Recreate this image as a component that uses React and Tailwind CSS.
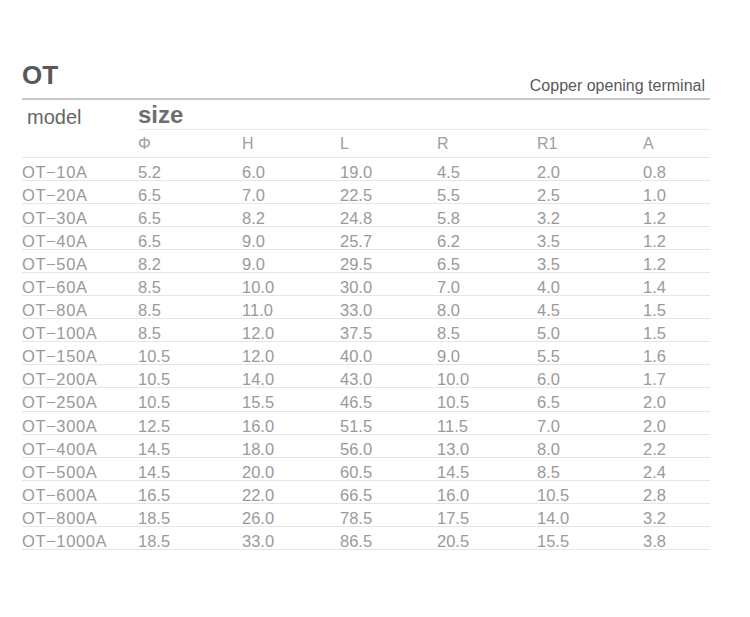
import React from "react"

const rows = [
  ["OT−10A", "5.2", "6.0", "19.0", "4.5", "2.0", "0.8"],
  ["OT−20A", "6.5", "7.0", "22.5", "5.5", "2.5", "1.0"],
  ["OT−30A", "6.5", "8.2", "24.8", "5.8", "3.2", "1.2"],
  ["OT−40A", "6.5", "9.0", "25.7", "6.2", "3.5", "1.2"],
  ["OT−50A", "8.2", "9.0", "29.5", "6.5", "3.5", "1.2"],
  ["OT−60A", "8.5", "10.0", "30.0", "7.0", "4.0", "1.4"],
  ["OT−80A", "8.5", "11.0", "33.0", "8.0", "4.5", "1.5"],
  ["OT−100A", "8.5", "12.0", "37.5", "8.5", "5.0", "1.5"],
  ["OT−150A", "10.5", "12.0", "40.0", "9.0", "5.5", "1.6"],
  ["OT−200A", "10.5", "14.0", "43.0", "10.0", "6.0", "1.7"],
  ["OT−250A", "10.5", "15.5", "46.5", "10.5", "6.5", "2.0"],
  ["OT−300A", "12.5", "16.0", "51.5", "11.5", "7.0", "2.0"],
  ["OT−400A", "14.5", "18.0", "56.0", "13.0", "8.0", "2.2"],
  ["OT−500A", "14.5", "20.0", "60.5", "14.5", "8.5", "2.4"],
  ["OT−600A", "16.5", "22.0", "66.5", "16.0", "10.5", "2.8"],
  ["OT−800A", "18.5", "26.0", "78.5", "17.5", "14.0", "3.2"],
  ["OT−1000A", "18.5", "33.0", "86.5", "20.5", "15.5", "3.8"],
]

const cols = ["w-[116px] tracking-[0.6px]", "w-[104px]", "w-[98px]", "w-[97px]", "w-[100px]", "w-[106px]", "flex-1"]
const heads = ["", "Φ", "H", "L", "R", "R1", "A"]

export default function App() {
  return (
    <div className="w-[750px] h-[617px] bg-white font-['Liberation_Sans',Arial,sans-serif]">
      <div className="ml-[22px] w-[688px] pt-[60px]">
        {/* title bar */}
        <div className="flex justify-between items-end border-b-2 border-[#c8c8c8]">
          <h1 className="text-[26px] leading-[30px] font-bold text-[#585858] pb-[8px]">OT</h1>
          <p className="text-[16px] leading-[18px] text-[#595959] pr-[5px] pb-[3px]">Copper opening terminal</p>
        </div>
        <div className="flex h-[30px]">
          <div className="w-[116px] pl-[5px] pt-[5px] text-[20px] leading-[24px] text-[#666]">model</div>
          <div className="flex-1 border-b border-[#ececec] pt-[1px] text-[24px] leading-[28px] text-[#6e6e6e] font-bold">size</div>
        </div>
        <div className="flex h-[28px] items-center border-b border-[#e6e6e6] text-[16px] text-[#a0a0a0]">
          {heads.map((h, i) => (
            <div key={i} className={cols[i]}>{h}</div>
          ))}
        </div>
        {rows.map((r) => (
          <div key={r[0]} className="flex h-[23.06px] pt-[6px] leading-[17px] border-b border-[#e6e6e6] text-[16.5px] text-[#9a9a9a]">
            {r.map((c, i) => (
              <div key={i} className={cols[i]}>{c}</div>
            ))}
          </div>
        ))}
      </div>
    </div>
  )
}
